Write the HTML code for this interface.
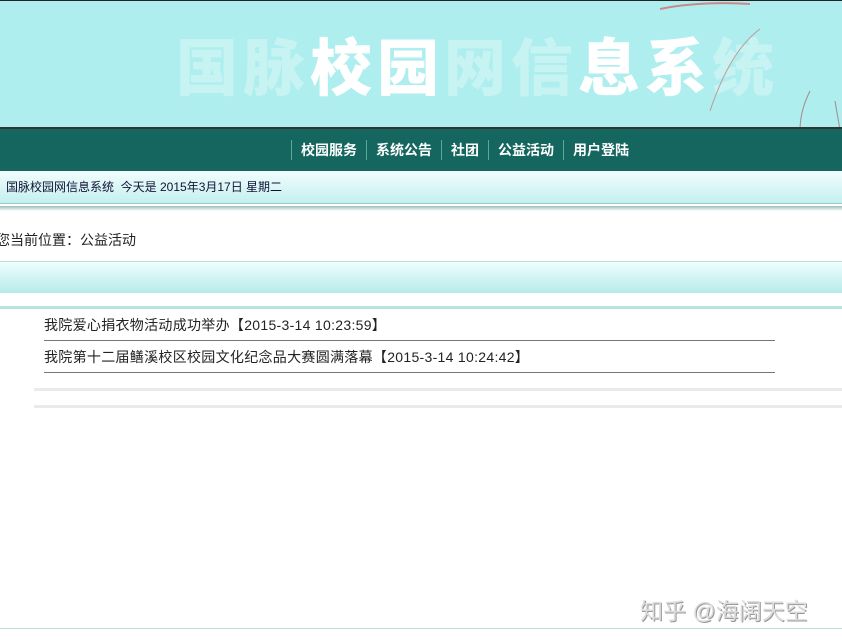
<!DOCTYPE html>
<html><head><meta charset="utf-8"><style>
body{margin:0;width:842px;height:643px;overflow:hidden;background:#fff;font-family:"Liberation Sans","Noto Sans CJK SC",sans-serif;position:relative}
.a{position:absolute}
</style></head><body>
<div class="a" style="left:0;top:0;width:842px;height:129px;background:#aeeeee;border-top:1px solid #222;border-bottom:2px solid #333;box-sizing:border-box;overflow:hidden">
<div class="a" style="left:176px;top:22px;font-size:62px;font-weight:900;letter-spacing:5px;color:#c8f3f3;font-family:'Noto Sans CJK SC',sans-serif;line-height:80px;white-space:nowrap"><span>国脉</span><span style="color:#fff">校园</span><span>网信</span><span style="color:#fff">息系</span><span>统</span></div>
<svg class="a" style="left:640px;top:0" width="202" height="129"><path d="M20 8 Q60 0 110 3" stroke="#c88" stroke-width="2" fill="none"/><path d="M120 28 Q90 50 70 110" stroke="#b99" stroke-width="1" fill="none"/><path d="M170 90 Q160 110 160 129" stroke="#a88" fill="none"/><path d="M195 100 L200 129" stroke="#a88" fill="none"/></svg>
</div>
<div class="a" style="left:0;top:129px;width:842px;height:42px;background:#14665e;color:#fff;font-size:14px;font-weight:bold;font-family:'Noto Sans CJK SC',sans-serif">
<div class="a" style="left:291px;top:10px;white-space:nowrap;line-height:22px"><span style="border-left:1px solid #5a9;padding:0 9px">校园服务</span><span style="border-left:1px solid #5a9;padding:0 9px">系统公告</span><span style="border-left:1px solid #5a9;padding:0 9px">社团</span><span style="border-left:1px solid #5a9;padding:0 9px">公益活动</span><span style="border-left:1px solid #5a9;padding:0 9px">用户登陆</span></div></div>
<div class="a" style="left:0;top:171px;width:842px;height:33px;background:linear-gradient(#f2fefe,#c4efef);border-bottom:1px solid #9cc;font-size:12px;color:#113;line-height:33px;padding-left:6px;box-sizing:border-box">国脉校园网信息系统&nbsp; 今天是 2015年3月17日 星期二</div>
<div class="a" style="left:0;top:206px;width:842px;height:5px;background:linear-gradient(#9bb,#fff)"></div>
<div class="a" style="left:0;top:230px;font-size:14px;color:#222;line-height:20px;margin-left:-4px">您当前位置：公益活动</div>
<div class="a" style="left:0;top:261px;width:842px;height:31px;background:linear-gradient(#effefe,#b7eaea);border-top:1px solid #bdd;"></div>
<div class="a" style="left:0;top:306px;width:842px;height:3px;background:#b8e4e0"></div>
<div class="a" style="left:44px;top:315px;font-size:14px;letter-spacing:0.3px;color:#222;line-height:20px;white-space:nowrap">我院爱心捐衣物活动成功举办【2015-3-14 10:23:59】</div>
<div class="a" style="left:44px;top:340px;width:731px;height:1px;background:#777"></div>
<div class="a" style="left:44px;top:347px;font-size:14px;letter-spacing:0.3px;color:#222;line-height:20px;white-space:nowrap">我院第十二届鳝溪校区校园文化纪念品大赛圆满落幕【2015-3-14 10:24:42】</div>
<div class="a" style="left:44px;top:372px;width:731px;height:1px;background:#777"></div>
<div class="a" style="left:34px;top:388px;width:808px;height:3px;background:#eaeaea"></div>
<div class="a" style="left:34px;top:405px;width:808px;height:3px;background:#eaeaea"></div>
<div class="a" style="left:640px;top:592px;font-size:23px;color:#ddd;text-shadow:1px 1px 0 #999;white-space:nowrap">知乎 @海阔天空</div>
<div class="a" style="left:0;top:628px;width:842px;height:1px;background:#bdd"></div>
</body></html>
